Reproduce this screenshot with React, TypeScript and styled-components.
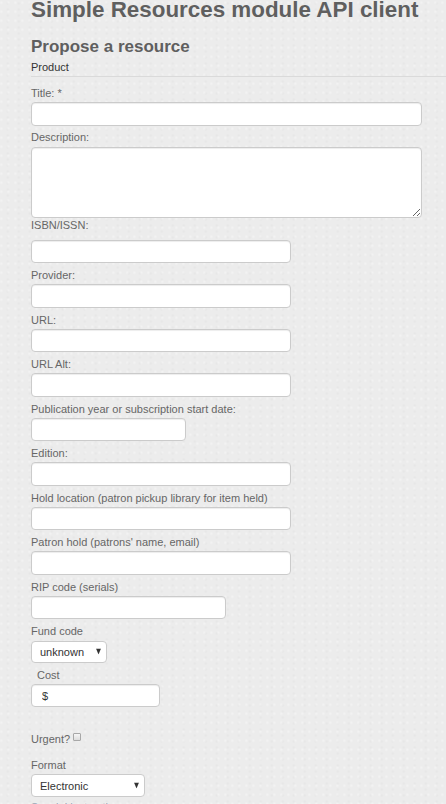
import React from "react";
import styled, { createGlobalStyle } from "styled-components";

const GlobalStyle = createGlobalStyle`
    html, body {
        margin: 0;
        padding: 0;
        background: #ececec;
        font-family: "Liberation Sans", Arial, sans-serif;
    }
`;

const Page = styled.div`
    padding: 0 0 0 31px;
    height: 804px;
    overflow: hidden;
    background:
        radial-gradient(circle at 20% 30%, rgba(255, 255, 255, 0.35) 0, transparent 2px) 0 0 / 7px 9px,
        radial-gradient(circle at 70% 60%, rgba(0, 0, 0, 0.025) 0, transparent 2px) 0 0 / 11px 6px,
        #ececec;
`;

const Title = styled.h1`
    margin: 0;
    font-size: 22.4px;
    line-height: 19px;
    font-weight: bold;
    color: #5f5f5f;
    white-space: nowrap;
`;

const SubTitle = styled.h2`
    margin: 18px 0 0;
    font-size: 17px;
    line-height: 20px;
    font-weight: bold;
    color: #5f5f5f;
`;

const Legend = styled.div`
    margin-top: 3px;
    padding-bottom: 2px;
    font-size: 11px;
    line-height: 14px;
    color: #333;
    border-bottom: 1px solid #dadada;
`;

const Form = styled.form`
    display: flex;
    flex-direction: column;
    align-items: flex-start;
`;

const Field = styled.div<{ $mt?: number }>`
    display: flex;
    flex-direction: column;
    align-items: flex-start;
    margin-top: ${(p) => (p.$mt ?? 6)}px;
`;

const Label = styled.label<{ $gap?: number; $indent?: number; $muted?: boolean }>`
    display: block;
    font-size: 11px;
    line-height: 12px;
    color: ${(p) => (p.$muted ? "#98a4b3" : "#666")};
    margin-bottom: ${(p) => (p.$gap ?? 3)}px;
    padding-left: ${(p) => p.$indent ?? 0}px;
`;

const TextInput = styled.input<{ $w: number; $h?: number }>`
    box-sizing: border-box;
    width: ${(p) => p.$w}px;
    height: ${(p) => p.$h ?? 23.5}px;
    margin: 0;
    padding: 0 10px;
    border: 1px solid #cbcbcb;
    border-radius: 4px;
    background: #fff;
    box-shadow: inset 0 1px 1px rgba(0, 0, 0, 0.075);
    font-family: inherit;
    font-size: 11px;
    color: #333;
    outline: none;
`;

const TextArea = styled.textarea`
    box-sizing: border-box;
    display: block;
    width: 391px;
    height: 70.5px;
    margin: 0;
    padding: 4px 6px;
    border: 1px solid #cbcbcb;
    border-radius: 4px;
    background: #fff;
    box-shadow: inset 0 1px 1px rgba(0, 0, 0, 0.075);
    font-family: inherit;
    font-size: 11px;
    outline: none;
`;

const SelectWrap = styled.div`
    position: relative;
    display: inline-block;
`;

const Select = styled.select<{ $w: number; $h?: number }>`
    appearance: none;
    -webkit-appearance: none;
    box-sizing: border-box;
    display: block;
    width: ${(p) => p.$w}px;
    height: ${(p) => p.$h ?? 23}px;
    margin: 0;
    padding: 0 0 0 8px;
    border: 1px solid #cbcbcb;
    border-radius: 4px;
    background: #fff;
    font-family: inherit;
    font-size: 11px;
    color: #333;
    outline: none;
`;

const Arrow = styled.span`
    position: absolute;
    right: 6px;
    top: 50%;
    transform: translateY(-60%);
    display: flex;
    pointer-events: none;
`;

const CheckRow = styled.div`
    display: flex;
    align-items: flex-start;
    margin-top: 26px;
    font-size: 11px;
    line-height: 12px;
    color: #666;
`;

const Check = styled.input`
    appearance: none;
    -webkit-appearance: none;
    box-sizing: border-box;
    width: 8px;
    height: 8px;
    margin: 0 0 0 3px;
    border: 1px solid #a8a8a8;
    border-radius: 1px;
    background: linear-gradient(#f6f6f6, #dddddd);
`;

function Dropdown({ value, width, height }: { value: string; width: number; height?: number }) {
    return (
        <SelectWrap>
            <Select $w={width} $h={height} defaultValue={value}>
                <option>{value}</option>
            </Select>
            <Arrow>
                <svg width="5" height="6" viewBox="0 0 5 6">
                    <polygon points="0,0 5,0 2.5,6" fill="#333" />
                </svg>
            </Arrow>
        </SelectWrap>
    );
}

const fields = [
    { label: "Provider:", w: 260 },
    { label: "URL:", w: 260 },
    { label: "URL Alt:", w: 260 },
    { label: "Publication year or subscription start date:", w: 155 },
    { label: "Edition:", w: 260 },
    { label: "Hold location (patron pickup library for item held)", w: 260 },
    { label: "Patron hold (patrons' name, email)", w: 260 },
    { label: "RIP code (serials)", w: 195 },
];

export default function App() {
    return (
        <>
            <GlobalStyle />
            <Page>
                <Title>Simple Resources module API client</Title>
                <SubTitle>Propose a resource</SubTitle>
                <Legend>Product</Legend>
                <Form onSubmit={(e) => e.preventDefault()}>
                    <Field $mt={10}>
                        <Label>Title: *</Label>
                        <TextInput $w={391} $h={24} />
                    </Field>
                    <Field $mt={5}>
                        <Label $gap={4}>Description:</Label>
                        <TextArea />
                    </Field>
                    <Field $mt={1}>
                        <Label $gap={9}>ISBN/ISSN:</Label>
                        <TextInput $w={260} />
                    </Field>
                    {fields.map((f, i) => (
                        <Field key={i}>
                            <Label>{f.label}</Label>
                            <TextInput $w={f.w} />
                        </Field>
                    ))}
                    <Field>
                        <Label $gap={3.5}>Fund code</Label>
                        <Dropdown value="unknown" width={76} height={22} />
                    </Field>
                    <Field $mt={6.5}>
                        <Label $indent={6}>Cost</Label>
                        <TextInput $w={129} $h={23} defaultValue="$" />
                    </Field>
                    <CheckRow>
                        Urgent?
                        <Check type="checkbox" />
                    </CheckRow>
                    <Field $mt={14}>
                        <Label>Format</Label>
                        <Dropdown value="Electronic" width={114} />
                    </Field>
                    <Field $mt={4}>
                        <Label $muted>Special instructions:</Label>
                        <TextInput $w={260} />
                    </Field>
                </Form>
            </Page>
        </>
    );
}
